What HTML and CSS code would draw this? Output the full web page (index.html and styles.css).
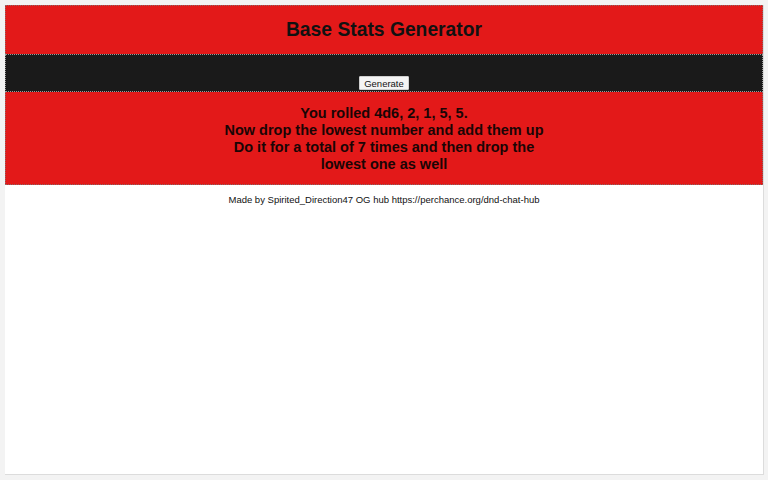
FILE: index.html
```html
<!DOCTYPE html>
<html>
<head>
<meta charset="utf-8">
<link rel="stylesheet" href="styles.css">
</head>
<body>
<div class="panel">
  <header class="header">
    <h1 class="title">Base Stats Generator</h1>
  </header>
  <div class="bar">
    <button class="btn">Generate</button>
  </div>
  <section class="result">
    <p class="result-text">You rolled 4d6, 2, 1, 5, 5.<br>Now drop the lowest number and add them up<br>Do it for a total of 7 times and then drop the lowest one as well</p>
  </section>
  <p class="footer">Made by Spirited_Direction47 OG hub https://perchance.org/dnd-chat-hub</p>
</div>
</body>
</html>
```
FILE: styles.css
```css
html, body {
  margin: 0;
  padding: 0;
}
body {
  background: #f3f3f3;
  padding: 5px 4px 4px 5px;
  font-family: "Liberation Sans", Arial, sans-serif;
  box-sizing: border-box;
  height: 480px;
}
.panel {
  background: #ffffff;
  border-right: 1px solid #dcdcdc;
  border-bottom: 1px solid #dcdcdc;
  height: 470px;
  box-sizing: border-box;
}
.header {
  background: #e31919;
  border: 1px dotted #8a6a6a;
  border-bottom: none;
  height: 49px;
  box-sizing: border-box;
  display: flex;
  align-items: center;
  justify-content: center;
}
.title {
  margin: 0;
  font-size: 19.3px;
  font-weight: bold;
  color: #111;
  line-height: 22px;
}
.bar {
  background: #1a1a1a;
  border: 1px dotted #999;
  height: 38px;
  box-sizing: border-box;
  display: flex;
  align-items: flex-end;
  justify-content: center;
}
.btn {
  font-family: "Liberation Sans", Arial, sans-serif;
  font-size: 9.5px;
  line-height: 11px;
  padding: 1px 4px 0;
  background: #f4f4f4;
  border: 1px solid #cfcfcf;
  border-radius: 1px;
  color: #111;
  margin: 0 0 1px;
}
.result {
  background: #e31919;
  border: 1px dotted #8a6a6a;
  border-top: none;
  height: 93px;
  box-sizing: border-box;
  display: flex;
  justify-content: center;
  padding-top: 13px;
}
.result-text {
  margin: 0;
  width: 325px;
  text-align: center;
  font-size: 14.5px;
  font-weight: bold;
  line-height: 17px;
  color: #1a0505;
}
.footer {
  margin: 9px 0 0;
  text-align: center;
  font-size: 9.5px;
  line-height: 12px;
  color: #111;
}
```
